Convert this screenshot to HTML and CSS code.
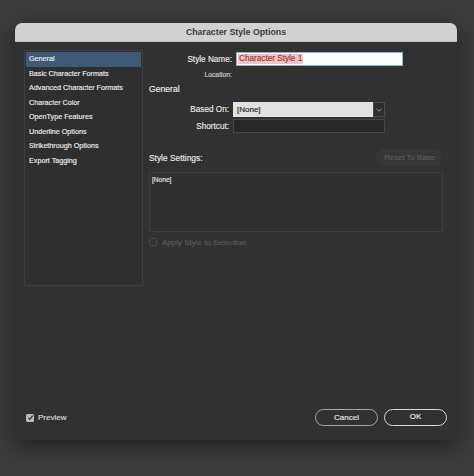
FILE: index.html
```html
<!DOCTYPE html>
<html>
<head>
<meta charset="utf-8">
<link rel="stylesheet" href="styles.css">
</head>
<body>
<div class="dialog">
  <div class="titlebar">Character Style Options</div>
  <div class="body">
    <div class="main">
      <ul class="nav">
        <li class="sel">General</li>
        <li>Basic Character Formats</li>
        <li>Advanced Character Formats</li>
        <li>Character Color</li>
        <li>OpenType Features</li>
        <li>Underline Options</li>
        <li>Strikethrough Options</li>
        <li>Export Tagging</li>
      </ul>
      <div class="panel">
        <div class="row r-name">
          <span class="lbl lbl-name">Style Name:</span>
          <div class="namefield"><span class="hl">Character Style 1</span></div>
        </div>
        <div class="row r-loc">
          <span class="lbl lbl-name small">Location:</span>
        </div>
        <div class="heading">General</div>
        <div class="row r-based">
          <span class="lbl lbl-based">Based On:</span>
          <div class="select">[None]</div>
          <div class="arrow"><svg width="8" height="6" viewBox="0 0 8 6"><path d="M1.5 1.8 L4 4.2 L6.5 1.8" fill="none" stroke="#9a9a9a" stroke-width="1"/></svg></div>
        </div>
        <div class="row r-short">
          <span class="lbl lbl-based">Shortcut:</span>
          <div class="shortcut"></div>
        </div>
        <div class="row r-settings">
          <span class="heading2">Style Settings:</span>
          <div class="reset">Reset To Base</div>
        </div>
        <div class="settingsbox">[None]</div>
        <div class="row r-apply">
          <span class="cb cb-off"></span>
          <span class="apply">Apply Style to Selection</span>
        </div>
      </div>
    </div>
    <div class="footer">
      <span class="cb cb-on"><svg width="7" height="7" viewBox="0 0 7 7"><path d="M1.3 3.6 L2.9 5.2 L5.8 1.6" fill="none" stroke="#3a3a3a" stroke-width="1.3"/></svg></span>
      <span class="preview">Preview</span>
      <div class="btns">
        <div class="btn">Cancel</div>
        <div class="btn ok">OK</div>
      </div>
    </div>
  </div>
</div>
</body>
</html>
```

FILE: styles.css
```css
html, body {
  margin: 0;
  padding: 0;
}
body {
  width: 474px;
  height: 476px;
  background: #3b3b3b;
  font-family: "Liberation Sans", Arial, sans-serif;
  color: #e6e6e6;
  overflow: hidden;
  padding-top: 23px;
  box-sizing: border-box;
  -webkit-text-stroke: 0.15px currentColor;
}
.dialog {
  margin-left: 15px;
  width: 442px;
  height: 417px;
  background: #313131;
  border-radius: 7px 7px 0 0;
  box-shadow: 0 6px 22px rgba(0,0,0,0.45);
  display: flex;
  flex-direction: column;
}
.titlebar {
  height: 19px;
  background: #d1d1d1;
  border-radius: 7px 7px 0 0;
  color: #3a3a3a;
  font-weight: bold;
  font-size: 8.8px;
  line-height: 19px;
  text-align: center;
  border-bottom: 1px solid #b8b8b8;
  box-sizing: border-box;
  -webkit-text-stroke: 0;
}
.body {
  flex: 1;
  display: flex;
  flex-direction: column;
  padding: 8px 10px 14px 9px;
}
.main {
  display: flex;
}
.nav {
  list-style: none;
  margin: 0;
  padding: 1px;
  width: 119px;
  height: 236px;
  box-sizing: border-box;
  background: #2f2f2f;
  border: 1px solid #3f3f3f;
}
.nav li {
  height: 14.5px;
  line-height: 14.5px;
  padding-left: 3px;
  font-size: 7.2px;
  color: #ececec;
  white-space: nowrap;
}
.nav li.sel {
  background: #3e5a79;
}
.panel {
  margin-left: 6px;
  width: 295px;
  display: flex;
  flex-direction: column;
}
.row {
  display: flex;
  align-items: center;
}
.lbl {
  text-align: right;
  font-size: 8.2px;
  color: #e8e8e8;
}
.lbl.small {
  font-size: 6.8px;
  color: #cfcfcf;
}
.lbl-name {
  width: 83px;
}
.lbl-based {
  width: 80px;
}
.r-name {
  margin-top: 2px;
  height: 14px;
}
.namefield {
  margin-left: 4px;
  width: 167px;
  height: 14px;
  box-sizing: border-box;
  background: #ffffff;
  border: 1px solid #8ab4e0;
  display: flex;
  align-items: center;
  padding-left: 1px;
}
.hl {
  background: #f3c4c4;
  color: #8e3a3a;
  font-size: 8.2px;
  line-height: 10px;
  padding: 0 1px;
}
.r-loc {
  margin-top: 3px;
  height: 10px;
}
.heading {
  margin-top: 5px;
  height: 10px;
  line-height: 10px;
  font-size: 8.6px;
  color: #ececec;
}
.r-based {
  margin-top: 8px;
  height: 15px;
}
.select {
  margin-left: 4px;
  width: 140px;
  height: 15px;
  box-sizing: border-box;
  background: #e1e1e1;
  color: #222;
  font-size: 8px;
  line-height: 15px;
  padding-left: 4px;
}
.arrow {
  width: 12px;
  height: 15px;
  box-sizing: border-box;
  background: #2e2e2e;
  border: 1px solid #4a4a4a;
  display: flex;
  align-items: center;
  justify-content: center;
}
.r-short {
  margin-top: 2px;
  height: 14px;
}
.shortcut {
  margin-left: 4px;
  width: 152px;
  height: 14px;
  box-sizing: border-box;
  background: #272727;
  border: 1px solid #464646;
}
.r-settings {
  margin-top: 16px;
  height: 17px;
  justify-content: space-between;
}
.heading2 {
  font-size: 8.4px;
  color: #eaeaea;
}
.reset {
  width: 67px;
  height: 17px;
  margin-right: 1px;
  border-radius: 8px;
  background: #363636;
  color: #5e5e5e;
  font-size: 7.8px;
  line-height: 17px;
  text-align: center;
}
.settingsbox {
  margin-top: 6px;
  width: 294px;
  height: 60px;
  box-sizing: border-box;
  border: 1px solid #3e3e3e;
  background: #303030;
  font-size: 6.6px;
  color: #e6e6e6;
  padding: 3px 2px;
}
.r-apply {
  margin-top: 5px;
  height: 10px;
}
.cb {
  display: inline-flex;
  align-items: center;
  justify-content: center;
  width: 8px;
  height: 8px;
  box-sizing: border-box;
  border-radius: 1.5px;
}
.cb-off {
  border: 1px solid #484848;
}
.cb-on {
  background: #bdbdbd;
}
.apply {
  margin-left: 5px;
  font-size: 8px;
  color: #5c5c5c;
}
.footer {
  margin-top: auto;
  display: flex;
  align-items: center;
  height: 17px;
  padding-left: 2px;
}
.preview {
  margin-left: 4px;
  font-size: 8px;
  color: #dcdcdc;
}
.btns {
  margin-left: auto;
  display: flex;
  gap: 6px;
}
.btn {
  width: 63px;
  height: 17px;
  box-sizing: border-box;
  border: 1px solid #a8a8a8;
  border-radius: 9px;
  font-size: 8px;
  line-height: 15px;
  text-align: center;
  color: #e8e8e8;
}
.btn.ok {
  border: 1.5px solid #d8d8d8;
  line-height: 14px;
}
```
